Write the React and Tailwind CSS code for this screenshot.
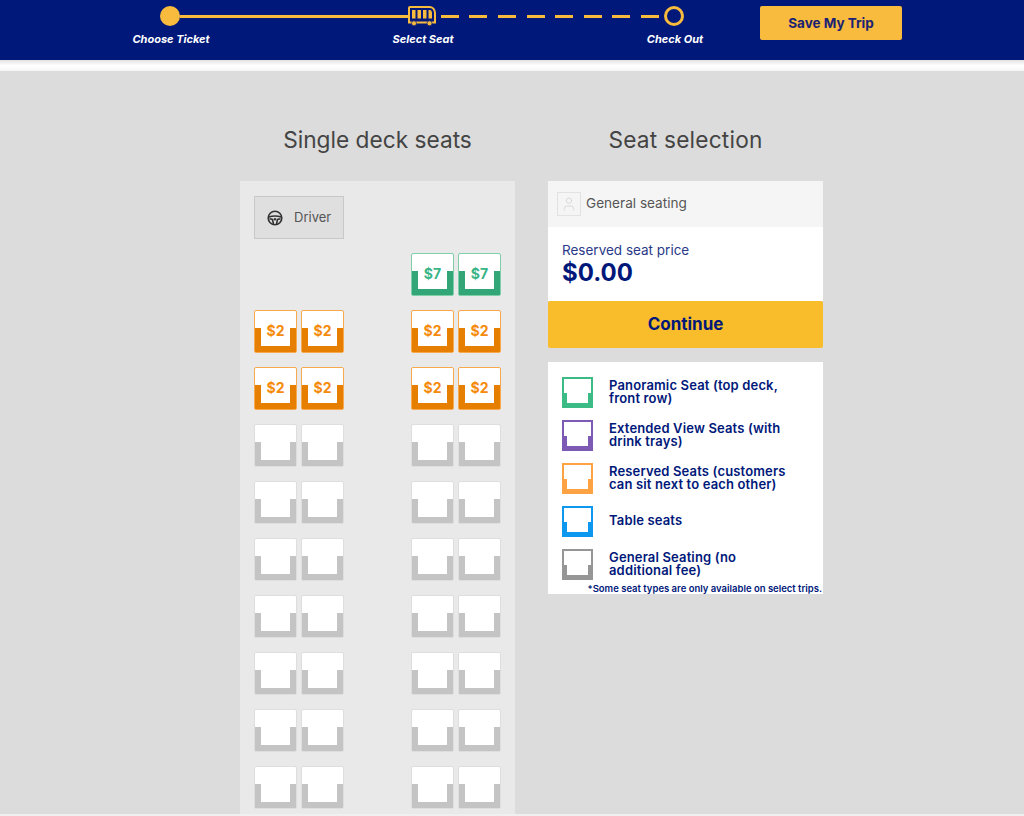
// App.jsx
// Seat selection page: stepper header, seat map and the selection / legend column.

import React from 'react';
import { User } from 'lucide-react';

const NAVY = 'text-[#00187a]';

// Seat colour variants, written out so Tailwind picks them up
const SEAT_STYLES = {
  green: { edge: 'border-[#7fcfa9]', tray: 'border-[#32a676]', text: 'text-[#3ab585]' },
  orange: { edge: 'border-[#f7a94f]', tray: 'border-[#e67e00]', text: 'text-[#f58a0b]' },
  empty: { edge: 'border-[#dedede]', tray: 'border-[#c4c4c4]', text: 'text-[#999999]' },
};

const LEGEND_STYLES = {
  green: { edge: 'border-[#3dbb87]', tray: 'border-[#3dbb87]' },
  purple: { edge: 'border-[#7d5bb5]', tray: 'border-[#7d5bb5]' },
  orange: { edge: 'border-[#ffa243]', tray: 'border-[#ffa243]' },
  blue: { edge: 'border-[#0b98ee]', tray: 'border-[#0b98ee]' },
  gray: { edge: 'border-[#969696]', tray: 'border-[#969696]' },
};

const LEGEND = [
  { color: 'green', label: 'Panoramic Seat (top deck, front row)' },
  { color: 'purple', label: 'Extended View Seats (with drink trays)' },
  { color: 'orange', label: 'Reserved Seats (customers can sit next to each other)' },
  { color: 'blue', label: 'Table seats' },
  { color: 'gray', label: 'General Seating (no additional fee)' },
];

const Seat = ({ type = 'empty', price }) => {
  const s = SEAT_STYLES[type];
  return (
    <div className={`relative flex h-[43px] w-[43px] flex-col overflow-hidden rounded-[2px] border bg-white ${s.edge}`}>
      <div className="h-[17px] shrink-0" />
      <div className={`flex-1 border-x-[6px] border-b-[6px] bg-white ${s.tray}`} />
      {price && (
        <span className={`absolute inset-x-0 top-[11px] text-center text-[14px] leading-[18px] font-bold ${s.text}`}>
          {price}
        </span>
      )}
    </div>
  );
};

const SeatRow = ({ type, price, leftEmpty }) => (
  <div className="flex">
    <div className="flex w-[90px] gap-1">
      {!leftEmpty && <Seat type={type} price={price} />}
      {!leftEmpty && <Seat type={type} price={price} />}
    </div>
    <div className="ml-[67px] flex gap-1">
      <Seat type={type} price={price} />
      <Seat type={type} price={price} />
    </div>
  </div>
);

const BusIcon = () => (
  <svg width="28" height="20" viewBox="0 0 28 20" fill="none" className="shrink-0">
    <path d="M2 1h19.500c3 0 5.500 2.500 5.500 6v9.500H1V2c0-.6.4-1 1-1z" stroke="#f8bb3d" strokeWidth="2" />
    <path d="M4 4h3.500v8.500H4zM9.500 4H13v8.500H9.500zM15 4h3.500v8.500H15zM20.500 4h1.500c1.200 0 2 1.500 2 3v5.500h-3.500z" fill="#f8bb3d" />
    <circle cx="6" cy="17.300" r="2.500" fill="#f8bb3d" stroke="#00187a" strokeWidth="0.700" />
    <circle cx="21.500" cy="17.300" r="2.500" fill="#f8bb3d" stroke="#00187a" strokeWidth="0.700" />
  </svg>
);

const WheelIcon = () => (
  <svg width="16" height="16" viewBox="0 0 16 16" fill="none" stroke="#333" strokeWidth="1.600">
    <circle cx="8" cy="8" r="6.800" />
    <path d="M1.800 7c4-1.300 8.400-1.300 12.400 0" />
    <path d="M2.500 8.800l3 .7 1 4.700M13.500 8.800l-3 .7-1 4.700" />
    <circle cx="8" cy="9.300" r="1.200" fill="#333" stroke="none" />
  </svg>
);

const Header = () => (
  <header className="relative h-[60px] bg-[#00187a]">
    <div className="absolute top-[6px] left-[760px] flex h-[34px] w-[142px] items-center justify-center rounded-[2px] bg-[#f8bb3d] text-[13.5px] font-bold text-[#1b2273]">
      Save My Trip
    </div>
    <div className="flex w-[684px] flex-col pt-[6px] pl-[160px]">
      <div className="flex h-[20px] items-center">
        <span className="h-[20px] w-[20px] shrink-0 rounded-full bg-[#f8bb3d]" />
        <span className="h-[3px] w-[228px] bg-[#f8bb3d]" />
        <BusIcon />
        <div className="ml-[5px] flex gap-[10.600px]">
          {[0, 1, 2, 3, 4, 5, 6, 7].map(i => (
            <span key={i} className="h-[3px] w-[18px] bg-[#f8bb3d]" />
          ))}
        </div>
        <span className="ml-[5px] h-[20px] w-[20px] shrink-0 rounded-full border-[3px] border-[#f8bb3d]" />
      </div>
    </div>
    <div className="mt-[6px] ml-[121px] flex gap-[152px] text-center text-[11px] leading-[14px] font-bold text-white italic">
      <span className="w-[100px]">Choose Ticket</span>
      <span className="w-[100px]">Select Seat</span>
      <span className="w-[100px]">Check Out</span>
    </div>
  </header>
);

const App = () => (
  <div className="flex h-[816px] flex-col overflow-hidden bg-[#dcdcdc] font-['Inter',sans-serif]">
    <Header />
    <div className="h-[11px] shrink-0 bg-gradient-to-b from-[#e2e2e2] via-white to-[#f6f6f6]" />

    <main className="flex h-[743px] shrink-0 pl-[240px]">
      {/* Seat map */}
      <section className="w-[275px] shrink-0">
        <h2 className="h-[110px] pt-[55px] text-center text-[22.7px] leading-[28px] font-normal text-[#444444]">
          Single deck seats
        </h2>
        <div className="flex h-[633px] flex-col gap-[14px] bg-[#e9e9e9] pt-[15px] pl-[14px]">
          <div className="flex h-[43px] w-[90px] items-center gap-[11px] border border-[#c8c8c8] bg-[#dfdfdf] pl-[12px] text-[13px] text-[#555555]">
            <WheelIcon />
            <span>Driver</span>
          </div>
          <SeatRow type="green" price="$7" leftEmpty />
          <SeatRow type="orange" price="$2" />
          <SeatRow type="orange" price="$2" />
          {[0, 1, 2, 3, 4, 5, 6].map(i => <SeatRow key={i} />)}
        </div>
      </section>

      {/* Selection column */}
      <section className="ml-[33px] w-[275px] shrink-0">
        <h2 className="h-[110px] pt-[55px] text-center text-[22.7px] leading-[28px] font-normal tracking-[0.2px] text-[#444444]">
          Seat selection
        </h2>
        <div className="flex h-[46px] items-center bg-[#f5f5f5] pb-[1px] pl-[9px]">
          <span className="flex h-[24px] w-[24px] items-center justify-center border border-[#e2e2e2]">
            <User size={16} strokeWidth={1.25} color="#d4d4d4" />
          </span>
          <span className="ml-[5px] text-[13.6px] text-[#555555]">General seating</span>
        </div>
        <div className="flex h-[74px] flex-col bg-white pt-[15px] pl-[14px]">
          <p className="text-[13.5px] leading-[16px] text-[#2a3a88]">Reserved seat price</p>
          <p className={`mt-[1px] text-[24px] leading-[28px] font-bold ${NAVY}`}>$0.00</p>
        </div>
        <div className={`flex h-[47px] items-center justify-center rounded-[2px] bg-[#f9bd2b] text-[17px] font-bold ${NAVY}`}>
          Continue
        </div>

        <div className="mt-[14px] flex h-[232px] flex-col bg-white pt-[15px]">
          <div className="flex flex-col gap-[12px] pl-[14px]">
            {LEGEND.map(item => {
              const s = LEGEND_STYLES[item.color];
              return (
                <div key={item.color} className="flex h-[31px] items-center gap-[16px]">
                  <div className={`flex h-[31px] w-[31px] shrink-0 flex-col border-2 bg-white ${s.edge}`}>
                    <div className="h-[14px] shrink-0" />
                    <div className={`flex-1 border-x-[3px] border-b-[3px] ${s.tray}`} />
                  </div>
                  <span className={`w-[190px] pb-[2px] text-[13px] leading-[13px] font-semibold tracking-[0.15px] ${NAVY}`}>{item.label}</span>
                </div>
              );
            })}
          </div>
          <p className={`mt-[3px] pr-[1px] text-right text-[9.5px] leading-[11px] font-semibold ${NAVY}`}>
            *Some seat types are only available on select trips.
          </p>
        </div>
      </section>
    </main>
    <div className="h-[2px] shrink-0 bg-[#f0f0f0]" />
  </div>
);

export default App;
